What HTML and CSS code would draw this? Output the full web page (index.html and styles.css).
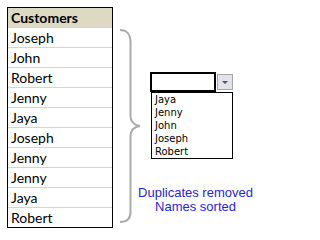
FILE: index.html
```html
<!DOCTYPE html>
<html>
<head>
<meta charset="utf-8">
<link rel="stylesheet" href="styles.css">
</head>
<body>
<div class="page">
  <div class="sheet">
    <div class="cell head">Customers</div>
    <div class="cell">Joseph</div>
    <div class="cell">John</div>
    <div class="cell">Robert</div>
    <div class="cell">Jenny</div>
    <div class="cell">Jaya</div>
    <div class="cell">Joseph</div>
    <div class="cell">Jenny</div>
    <div class="cell">Jenny</div>
    <div class="cell">Jaya</div>
    <div class="cell last">Robert</div>
  </div>
  <svg class="brace" viewBox="0 0 24 200" width="24" height="200">
    <path d="M7 5 C13 5 17.5 9 17.5 17 L17.5 91 C17.5 97 21 100 27 101 C21 102 17.5 105 17.5 111 L17.5 187 C17.5 194 13 197 7 197" fill="none" stroke="#ababab" stroke-width="2"/>
  </svg>
  <div class="side">
    <div class="combo">
      <div class="input"></div>
      <div class="btn">
        <svg viewBox="0 0 14 14" width="14" height="14"><path d="M4 6 L10 6 L7 9 Z" fill="#555"/></svg>
      </div>
    </div>
    <ul class="list">
      <li>Jaya</li>
      <li>Jenny</li>
      <li>John</li>
      <li>Joseph</li>
      <li>Robert</li>
    </ul>
    <p class="note">Duplicates removed<br>Names sorted</p>
  </div>
</div>
</body>
</html>
```
FILE: styles.css
```css
html, body {
  margin: 0;
  padding: 0;
  background: #fff;
}
.page {
  display: flex;
  align-items: flex-start;
  padding: 7px 0 0 7px;
}
.sheet {
  width: 106px;
  box-sizing: border-box;
  border: 1px solid #000;
  flex: none;
}
.cell {
  height: 20px;
  box-sizing: border-box;
  border-bottom: 1px solid #d4d4d4;
  padding-left: 3px;
  font-family: Lato, "Open Sans", sans-serif;
  font-size: 14px;
  line-height: 20px;
  color: #000;
}
.cell.last {
  height: 19px;
  border-bottom: none;
}
.head {
  background: #ddd9c3;
  font-weight: bold;
}
.brace {
  flex: none;
  margin-top: 18px;
  overflow: visible;
}
.side {
  padding-top: 65px;
  flex: none;
}
.combo {
  display: flex;
  align-items: center;
  margin-left: 13px;
}
.input {
  width: 66px;
  height: 20px;
  box-sizing: border-box;
  border: 2px solid #000;
}
.btn {
  width: 16px;
  height: 16px;
  box-sizing: border-box;
  margin-left: 1px;
  background: #e2e3ea;
  border: 1px solid #a3a5b0;
  display: flex;
  align-items: center;
  justify-content: center;
}
.list {
  list-style: none;
  margin: 0 0 0 14px;
  padding: 0 0 0 3px;
  width: 82px;
  box-sizing: border-box;
  border: 1px solid #000;
  font-family: "DejaVu Sans", sans-serif;
  font-size: 10px;
  line-height: 13px;
  color: #000;
}
.note {
  margin: 27px 0 0 0;
  width: 117px;
  text-align: center;
  font-family: "Liberation Sans", Arial, sans-serif;
  font-size: 13px;
  line-height: 14px;
  color: #2626d2;
}
```
